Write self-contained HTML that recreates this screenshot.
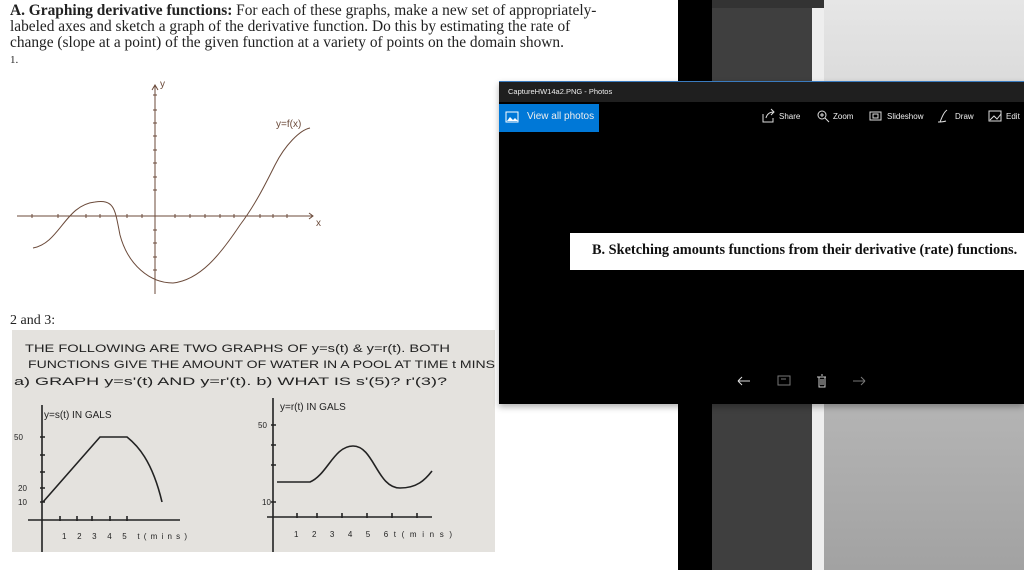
<!DOCTYPE html>
<html><head><meta charset="utf-8"><style>
body{margin:0;width:1024px;height:570px;overflow:hidden;background:#fff;position:relative;font-family:"Liberation Serif",serif}
.a{position:absolute}
.t{font-size:15.4px;line-height:16px;color:#222;left:10px;top:3px;width:620px;white-space:nowrap}
.tb{color:#eee;font-family:"Liberation Sans",sans-serif;font-size:8px}
</style></head><body>
<div class="a t"><b>A. Graphing derivative functions:</b> For each of these graphs, make a new set of appropriately-<br>labeled axes and sketch a graph of the derivative function. Do this by estimating the rate of<br>change (slope at a point) of the given function at a variety of points on the domain shown.<br><span style="font-size:11px">1.</span></div>
<svg class="a" style="left:0;top:75px" width="340" height="225">
<g stroke="#6b4a3a" fill="none" stroke-width="1">
<path d="M17 141H313M309 138l4 3-4 3"/>
<path d="M155 10V219M152 15l3-5 3 5"/>
<path d="M33 173C60 168 65 130 95 127C115 124 115 135 120 160C128 190 150 208 173 208C200 205 220 180 240 150C255 130 265 110 275 90C285 70 300 55 310 53"/>
<path d="M32 139v4M58 139v4M86 139v4M100 139v4M127 139v4M142 139v4M175 139v4M190 139v4M205 139v4M220 139v4M234 139v4M260 139v4M273 139v4M287 139v4M153 20h4M153 35h4M153 48h4M153 61h4M153 75h4M153 88h4M153 102h4M153 115h4M153 155h4M153 168h4M153 182h4M153 195h4"/>
</g>
<g fill="#6b4a3a" font-family="Liberation Sans" font-size="10"><text x="160" y="12">y</text><text x="276" y="52">y=f(x)</text><text x="316" y="151">x</text></g>
</svg>
<div class="a" style="left:10px;top:313px;font-size:14px;color:#222">2 and 3:</div>
<div class="a" style="left:12px;top:330px;width:483px;height:222px;background:#e4e2de"></div>
<svg class="a" style="left:12px;top:330px" width="483" height="222" font-family="Liberation Sans" font-size="11" fill="#222">
<text x="13" y="22" textLength="425" lengthAdjust="spacingAndGlyphs">THE FOLLOWING ARE TWO GRAPHS OF y=s(t) &amp; y=r(t). BOTH</text>
<text x="16" y="38" textLength="467" lengthAdjust="spacingAndGlyphs">FUNCTIONS GIVE THE AMOUNT OF WATER IN A POOL AT TIME t MINS</text>
<text x="2" y="55" textLength="433" lengthAdjust="spacingAndGlyphs">a) GRAPH  y=s'(t)  AND  y=r'(t).   b) WHAT IS s'(5)?  r'(3)?</text>
<text x="32" y="88" font-size="10">y=s(t) IN GALS</text>
<text x="268" y="80" font-size="10">y=r(t) IN GALS</text>
<g font-size="8"><text x="2" y="110">50</text><text x="6" y="161">20</text><text x="6" y="175">10</text><text x="246" y="98">50</text><text x="250" y="175">10</text>
<text x="50" y="209" textLength="125">1   2   3   4   5   t(mins)</text><text x="282" y="207" textLength="158">1     2     3     4     5   6t(mins)</text></g>
<g stroke="#222" fill="none" stroke-width="1.6">
<path d="M30 75V222M16 190H168M31 172L88 107H115C125 115 140 130 150 172"/>
<path d="M261 68V222M255 187H420M265 152H298C315 145 322 116 341 116C362 116 365 158 388 158C405 158 413 150 420 141"/>
<path d="M48 186v5M65 186v5M80 186v5M98 186v5M115 186v5M285 183v5M305 183v5M330 183v5M355 183v5M380 183v5M405 183v5M28 107h5M28 125h5M28 142h5M28 158h5M28 172h5M259 95h5M259 115h5M259 135h5M259 172h5"/>
</g></svg>
<div class="a" style="left:678px;top:0;width:35px;height:570px;background:#000"></div>
<div class="a" style="left:712px;top:0;width:100px;height:570px;background:#3f3f3f"></div>
<div class="a" style="left:812px;top:0;width:12px;height:570px;background:#eee"></div>
<div class="a" style="left:824px;top:0;width:200px;height:570px;background:linear-gradient(#e6e6e6,#c8c8c8 40%,#a2a2a2)"></div>
<div class="a" style="left:712px;top:0;width:112px;height:8px;background:#333"></div>
<div class="a" style="left:499px;top:81px;width:525px;height:322px;background:#000;border-top:1px solid #3a7bbf;box-shadow:0 3px 6px rgba(0,0,0,.3)"></div>
<div class="a" style="left:499px;top:82px;width:525px;height:20px;background:#1f1f1f"></div>
<div class="a tb" style="left:508px;top:87px;font-size:7.5px">CaptureHW14a2.PNG - Photos</div>
<div class="a" style="left:499px;top:104px;width:100px;height:28px;background:#0078d7"></div>
<svg class="a" style="left:505px;top:111px" width="14" height="12"><path d="M1 1h12v10H1z" stroke="#fff" fill="none"/><path d="M2 10l3-4 3 3 2-2 3 3z" fill="#fff"/></svg>
<div class="a tb" style="left:527px;top:111px;font-size:10px">View all photos</div>
<svg class="a" style="left:760px;top:108px" width="270" height="18" stroke="#ddd" fill="none">
<path d="M3 6v8h10v-4M6 10c1-4 4-6 8-6M11 1l3 3-3 3"/>
<circle cx="62" cy="7" r="4"/><path d="M65 10l4 4M60 7h4M62 5v4"/>
<rect x="110" y="4" width="11" height="8"/><rect x="113" y="6" width="5" height="4"/>
<path d="M180 14c2-5 4-10 7-12M178 14c3 0 5 0 8-1"/>
<rect x="229" y="3" width="12" height="10"/><path d="M230 12l4-4 3 3 4-5"/>
</svg>
<div class="a tb" style="left:779px;top:112px">Share</div>
<div class="a tb" style="left:833px;top:112px">Zoom</div>
<div class="a tb" style="left:887px;top:112px">Slideshow</div>
<div class="a tb" style="left:955px;top:112px">Draw</div>
<div class="a tb" style="left:1006px;top:112px">Edit</div>
<div class="a" style="left:570px;top:233px;width:454px;height:37px;background:#fff"></div>
<div class="a" style="left:592px;top:242px;font-size:14.3px;font-weight:bold;color:#111;white-space:nowrap">B. Sketching amounts functions from their derivative (rate) functions.</div>
<svg class="a" style="left:735px;top:372px" width="135" height="18" fill="none">
<path d="M3 9h12M3 9l4-4M3 9l4 4" stroke="#ddd"/>
<path d="M43 4h12v9H43zM46 7h5" stroke="#777"/>
<path d="M82 5h9M84 5v10h6V5M86 3h2M86 7v6M88 7v6" stroke="#ccc"/>
<path d="M118 9h12M130 9l-4-4M130 9l-4 4" stroke="#777"/>
</svg>
</body></html>
